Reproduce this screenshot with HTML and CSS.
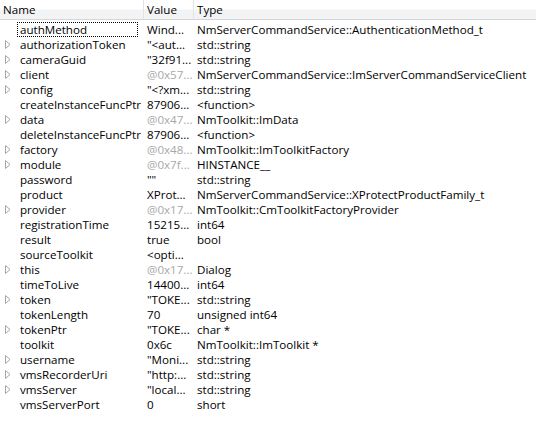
FILE: index.html
```html
<!DOCTYPE html>
<html>
<head>
<meta charset="utf-8">
<link rel="stylesheet" href="styles.css">
</head>
<body>
<div class="grid">
  <div class="head">
    <div class="hcell c-name">Name</div>
    <div class="hcell c-val">Value</div>
    <div class="hcell c-type">Type</div>
  </div>
  <div class="rows">
    <div class="row"><div class="name"><span class="tog"></span><span class="focus">authMethod</span></div><div class="val">Wind...</div><div class="type">NmServerCommandService::AuthenticationMethod_t</div></div>
    <div class="row"><div class="name"><span class="tog"><svg viewBox="0 0 6 9" width="6" height="9"><path d="M0.5 0.5 L5 4.5 L0.5 8.5 Z"/></svg></span><span>authorizationToken</span></div><div class="val">"&lt;aut...</div><div class="type">std::string</div></div>
    <div class="row"><div class="name"><span class="tog"><svg viewBox="0 0 6 9" width="6" height="9"><path d="M0.5 0.5 L5 4.5 L0.5 8.5 Z"/></svg></span><span>cameraGuid</span></div><div class="val">"32f91...</div><div class="type">std::string</div></div>
    <div class="row"><div class="name"><span class="tog"><svg viewBox="0 0 6 9" width="6" height="9"><path d="M0.5 0.5 L5 4.5 L0.5 8.5 Z"/></svg></span><span>client</span></div><div class="val dim">@0x57...</div><div class="type">NmServerCommandService::ImServerCommandServiceClient</div></div>
    <div class="row"><div class="name"><span class="tog"><svg viewBox="0 0 6 9" width="6" height="9"><path d="M0.5 0.5 L5 4.5 L0.5 8.5 Z"/></svg></span><span>config</span></div><div class="val">"&lt;?xm...</div><div class="type">std::string</div></div>
    <div class="row"><div class="name"><span class="tog"></span><span>createInstanceFuncPtr</span></div><div class="val">87906...</div><div class="type">&lt;function&gt;</div></div>
    <div class="row"><div class="name"><span class="tog"><svg viewBox="0 0 6 9" width="6" height="9"><path d="M0.5 0.5 L5 4.5 L0.5 8.5 Z"/></svg></span><span>data</span></div><div class="val dim">@0x47...</div><div class="type">NmToolkit::ImData</div></div>
    <div class="row"><div class="name"><span class="tog"></span><span>deleteInstanceFuncPtr</span></div><div class="val">87906...</div><div class="type">&lt;function&gt;</div></div>
    <div class="row"><div class="name"><span class="tog"><svg viewBox="0 0 6 9" width="6" height="9"><path d="M0.5 0.5 L5 4.5 L0.5 8.5 Z"/></svg></span><span>factory</span></div><div class="val dim">@0x48...</div><div class="type">NmToolkit::ImToolkitFactory</div></div>
    <div class="row"><div class="name"><span class="tog"><svg viewBox="0 0 6 9" width="6" height="9"><path d="M0.5 0.5 L5 4.5 L0.5 8.5 Z"/></svg></span><span>module</span></div><div class="val dim">@0x7f...</div><div class="type">HINSTANCE__</div></div>
    <div class="row"><div class="name"><span class="tog"></span><span>password</span></div><div class="val">""</div><div class="type">std::string</div></div>
    <div class="row"><div class="name"><span class="tog"></span><span>product</span></div><div class="val">XProt...</div><div class="type">NmServerCommandService::XProtectProductFamily_t</div></div>
    <div class="row"><div class="name"><span class="tog"><svg viewBox="0 0 6 9" width="6" height="9"><path d="M0.5 0.5 L5 4.5 L0.5 8.5 Z"/></svg></span><span>provider</span></div><div class="val dim">@0x17...</div><div class="type">NmToolkit::CmToolkitFactoryProvider</div></div>
    <div class="row"><div class="name"><span class="tog"></span><span>registrationTime</span></div><div class="val">15215...</div><div class="type">int64</div></div>
    <div class="row"><div class="name"><span class="tog"></span><span>result</span></div><div class="val">true</div><div class="type">bool</div></div>
    <div class="row"><div class="name"><span class="tog"></span><span>sourceToolkit</span></div><div class="val">&lt;opti...</div><div class="type"></div></div>
    <div class="row"><div class="name"><span class="tog"><svg viewBox="0 0 6 9" width="6" height="9"><path d="M0.5 0.5 L5 4.5 L0.5 8.5 Z"/></svg></span><span>this</span></div><div class="val dim">@0x17...</div><div class="type">Dialog</div></div>
    <div class="row"><div class="name"><span class="tog"></span><span>timeToLive</span></div><div class="val">14400...</div><div class="type">int64</div></div>
    <div class="row"><div class="name"><span class="tog"><svg viewBox="0 0 6 9" width="6" height="9"><path d="M0.5 0.5 L5 4.5 L0.5 8.5 Z"/></svg></span><span>token</span></div><div class="val">"TOKE...</div><div class="type">std::string</div></div>
    <div class="row"><div class="name"><span class="tog"></span><span>tokenLength</span></div><div class="val">70</div><div class="type">unsigned int64</div></div>
    <div class="row"><div class="name"><span class="tog"><svg viewBox="0 0 6 9" width="6" height="9"><path d="M0.5 0.5 L5 4.5 L0.5 8.5 Z"/></svg></span><span>tokenPtr</span></div><div class="val">"TOKE...</div><div class="type">char *</div></div>
    <div class="row"><div class="name"><span class="tog"></span><span>toolkit</span></div><div class="val">0x6c</div><div class="type">NmToolkit::ImToolkit *</div></div>
    <div class="row"><div class="name"><span class="tog"><svg viewBox="0 0 6 9" width="6" height="9"><path d="M0.5 0.5 L5 4.5 L0.5 8.5 Z"/></svg></span><span>username</span></div><div class="val">"Moni...</div><div class="type">std::string</div></div>
    <div class="row"><div class="name"><span class="tog"><svg viewBox="0 0 6 9" width="6" height="9"><path d="M0.5 0.5 L5 4.5 L0.5 8.5 Z"/></svg></span><span>vmsRecorderUri</span></div><div class="val">"http:...</div><div class="type">std::string</div></div>
    <div class="row"><div class="name"><span class="tog"><svg viewBox="0 0 6 9" width="6" height="9"><path d="M0.5 0.5 L5 4.5 L0.5 8.5 Z"/></svg></span><span>vmsServer</span></div><div class="val">"local...</div><div class="type">std::string</div></div>
    <div class="row"><div class="name"><span class="tog"></span><span>vmsServerPort</span></div><div class="val">0</div><div class="type">short</div></div>
  </div>
</div>
</body>
</html>
```

FILE: styles.css
```css
html, body {
  margin: 0;
  padding: 0;
  background: #ffffff;
}
body {
  font-family: "Open Sans", "Noto Sans", sans-serif;
  font-size: 11.6px;
  color: #000000;
  width: 536px;
  height: 436px;
  overflow: hidden;
}
.head {
  display: grid;
  grid-template-columns: 144px 50px 1fr;
  height: 19px;
  border-bottom: 1px solid #d5d5d5;
  background: linear-gradient(#ffffff 0, #ffffff 9px, #f2f3f5 10px, #f2f3f5 100%);
}
.hcell {
  line-height: 19px;
  padding-left: 3px;
  border-right: 1px solid #e3e4e6;
  color: #000;
}
.hcell.c-type {
  border-right: none;
}
.rows {
  padding-top: 2px;
}
.row {
  display: grid;
  grid-template-columns: 144px 50px 1fr;
  height: 15px;
  line-height: 15px;
  white-space: nowrap;
}
.name {
  display: flex;
  align-items: center;
  padding-left: 5px;
  min-width: 0;
}
.tog {
  width: 15px;
  flex: none;
  display: flex;
  align-items: center;
}
.tog svg {
  display: block;
}
.tog path {
  fill: #ffffff;
  stroke: #a6a6a6;
  stroke-width: 1;
}
.focus {
  flex: 1;
  outline: 1px dotted #000;
  outline-offset: -1px;
  padding: 0 0 0 3px;
  margin: 0 6px 0 -3px;
  height: 15px;
}
.val {
  padding-left: 3px;
  min-width: 0;
}
.val.dim {
  color: #a8a8a8;
}
.type {
  padding-left: 3px;
}
```
